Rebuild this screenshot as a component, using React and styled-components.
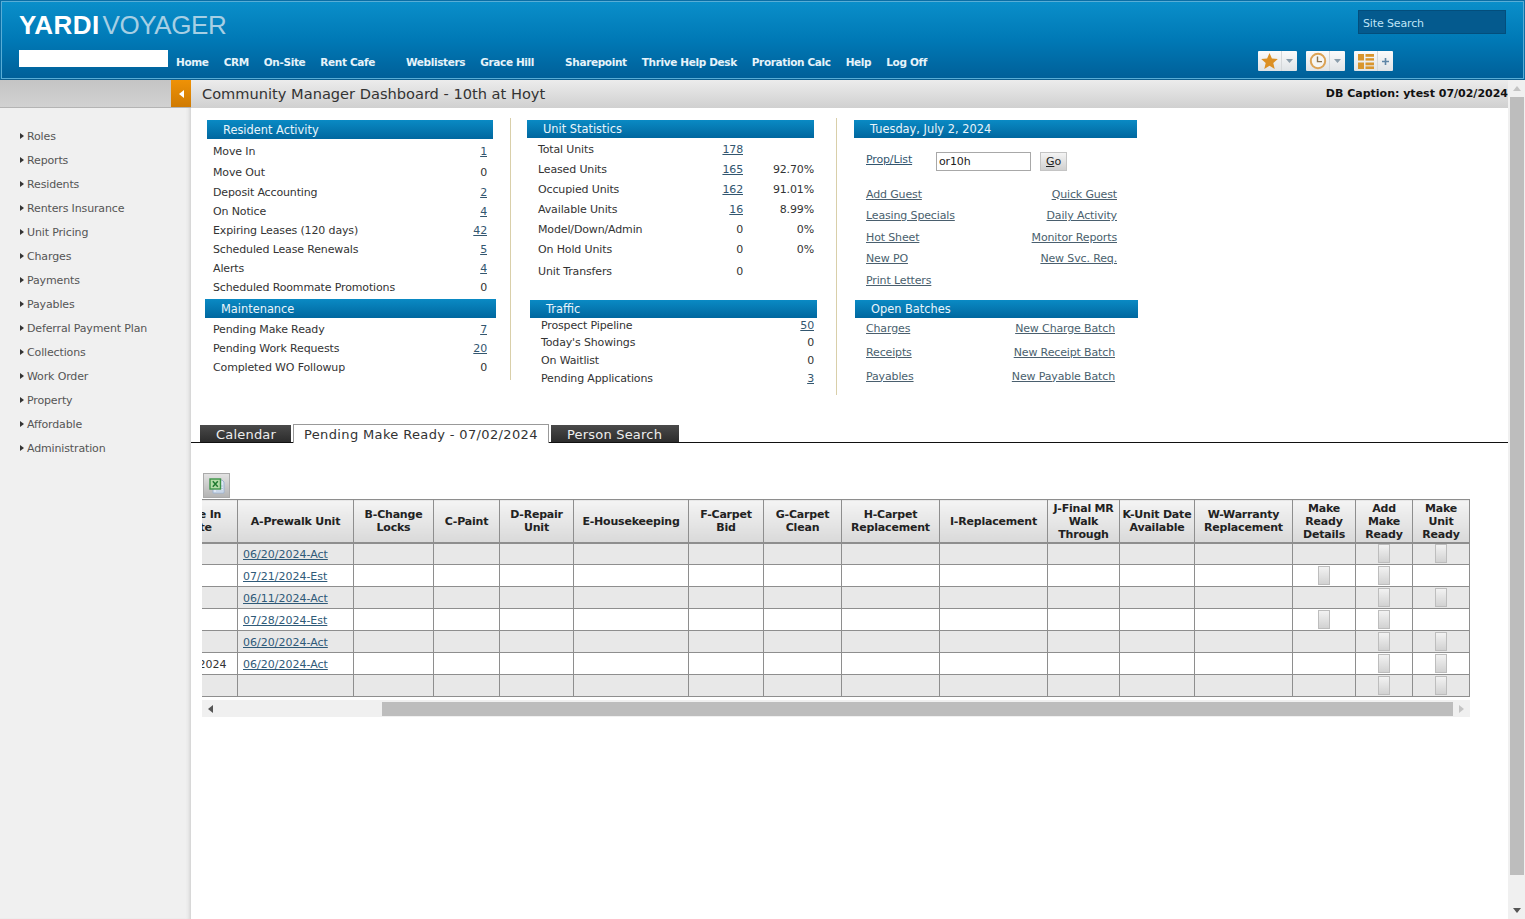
import React, { useLayoutEffect, useRef } from 'react';
import styled, { createGlobalStyle } from 'styled-components';

const GlobalStyle = createGlobalStyle`
  html, body {
    margin: 0;
    padding: 0;
    overflow: hidden;
    background: #fff;
  }
  body {
    font-family: "DejaVu Sans", Verdana, sans-serif;
    font-size: 11px;
    letter-spacing: -0.14px;
    color: #333;
  }
  * {
    box-sizing: border-box;
  }
`;

const Page = styled.div`
  width: 1525px;
  height: 919px;
  display: flex;
  flex-direction: column;
  overflow: hidden;
`;

const Header = styled.header`
  height: 80px;
  flex: none;
  display: flex;
  flex-direction: column;
  position: relative;
  background: linear-gradient(#0a8fca, #0079b6 50%, #005f98);
  border: 1px solid #0b6ea5;
  box-shadow: inset 0 0 0 1px #58add6;
  border-bottom: 1px solid #0c5f8f;
`;

const TopRow = styled.div`
  height: 48px;
  display: flex;
  justify-content: space-between;
  padding: 9px 18px 0 18px;
`;

const Logo = styled.div`
  font-family: "Liberation Sans", Arial, sans-serif;
  font-size: 26px;
  line-height: 30px;
  letter-spacing: 0.4px;
  color: #fff;
  font-weight: 700;
  span {
    font-weight: 400;
    letter-spacing: -0.4px;
    color: #a6cfe4;
    margin-left: 3px;
  }
`;

const SiteSearch = styled.div`
  width: 148px;
  height: 24px;
  background: #045a8e;
  border: 1px solid #034e7c;
  color: #bfe4f7;
  font-size: 11px;
  line-height: 25px;
  padding-left: 4px;
`;

const NavRow = styled.div`
  display: flex;
  align-items: center;
  padding-left: 18px;
  height: 24px;
`;

const BlankBox = styled.div`
  width: 149px;
  height: 17px;
  background: #fff;
  margin-right: 8px;
  margin-top: -6px;
`;

const NavLink = styled.a`
  color: #e6f3fa;
  font-size: 10.5px;
  font-weight: 700;
  letter-spacing: -0.36px;
  margin-right: ${(p) => (p.$wide ? '31px' : '15px')};
  margin-top: 1px;
  white-space: nowrap;
`;

const ToolGroup = styled.div`
  display: flex;
  gap: 9px;
  position: absolute;
  top: 50px;
  left: 1257px;
`;

const ToolButton = styled.div`
  width: 39px;
  height: 20px;
  display: flex;
  background: linear-gradient(#fbfbfb, #dfe3e6);
  border-radius: 1px;
`;

const ToolIcon = styled.div`
  width: 24px;
  display: flex;
  align-items: center;
  justify-content: center;
  border-right: 1px solid #d5d8da;
`;

const ToolCaret = styled.div`
  flex: 1;
  display: flex;
  align-items: center;
  justify-content: center;
`;

const Body = styled.div`
  flex: 1;
  display: flex;
  min-height: 0;
`;

const Sidebar = styled.aside`
  width: 191px;
  flex: none;
  display: flex;
  flex-direction: column;
  background: #f0f0f0;
  box-shadow: inset -4px 0 4px -3px #c8c8c8;
`;

const SidebarTop = styled.div`
  height: 28px;
  display: flex;
  justify-content: flex-end;
  background: linear-gradient(#c4c4c4, #d2d2d2);
  border-bottom: 1px solid #b4b4b4;
`;

const Collapse = styled.div`
  width: 20px;
  height: 27px;
  background: linear-gradient(#ef9206, #cf7a02);
  display: flex;
  align-items: center;
  justify-content: center;
  &::before {
    content: '';
    border-style: solid;
    border-width: 4px 5px 4px 0;
    border-color: transparent #fff transparent transparent;
  }
`;

const SideList = styled.nav`
  padding: 16px 0 0 20px;
`;

const SideItem = styled.div`
  height: 24px;
  display: flex;
  align-items: center;
  color: #555;
  font-size: 11px;
  &::before {
    content: '';
    border-style: solid;
    border-width: 3.5px 0 3.5px 4px;
    border-color: transparent transparent transparent #333;
    margin-right: 3px;
  }
`;

const Main = styled.main`
  flex: 1;
  display: flex;
  min-width: 0;
`;

const Content = styled.div`
  flex: 1;
  min-width: 0;
`;

const VBar = styled.div`
  width: 17px;
  flex: none;
  display: flex;
  flex-direction: column;
  background: #f0f0f0;
`;

const VThumb = styled.div`
  height: 778px;
  margin: 0 1px 0 2px;
  background: #bdbdbd;
`;

const BarGap = styled.div`
  flex: ${(p) => (p.$width ? 'none' : '1')};
  width: ${(p) => (p.$width ? `${p.$width}px` : 'auto')};
`;

const arrowBorders = {
  up: { width: '0 4px 5px 4px', side: 'border-bottom-color' },
  down: { width: '5px 4px 0 4px', side: 'border-top-color' },
  left: { width: '4px 5px 4px 0', side: 'border-right-color' },
  right: { width: '4px 0 4px 5px', side: 'border-left-color' },
};

const BarArrow = styled.div`
  width: 17px;
  height: 17px;
  flex: none;
  display: flex;
  align-items: center;
  justify-content: center;
  &::before {
    content: '';
    border-style: solid;
    border-color: transparent;
    border-width: ${(p) => arrowBorders[p.$dir].width};
    ${(p) => arrowBorders[p.$dir].side}: ${(p) => (p.$dim ? '#c4c4c4' : '#555')};
  }
`;

const TitleBar = styled.div`
  height: 28px;
  display: flex;
  align-items: center;
  justify-content: space-between;
  padding: 0 0 2px 11px;
  background: linear-gradient(#ececec, #d0d0d0);
`;

const Title = styled.h1`
  margin: 0;
  font-size: 14.6px;
  font-weight: 400;
  letter-spacing: 0;
  color: #333;
`;

const Caption = styled.div`
  font-size: 11px;
  font-weight: 700;
  letter-spacing: 0;
  color: #111;
`;

const Dashboard = styled.div`
  height: 316px;
  display: flex;
  align-items: flex-start;
  padding: 12px 0 0 14px;
`;

const Column = styled.section`
  width: ${(p) => p.$width}px;
  flex: none;
`;

const Divider = styled.div`
  width: 1px;
  flex: none;
  height: ${(p) => p.$height}px;
  margin: -2px ${(p) => p.$right}px 0 ${(p) => p.$left}px;
  background: #d9cfa9;
`;

const PanelHead = styled.h2`
  margin: ${(p) => p.$margin || '0'};
  height: ${(p) => p.$height || 18}px;
  padding-left: 16px;
  display: flex;
  align-items: center;
  font-size: 11.4px;
  font-weight: 400;
  letter-spacing: 0;
  color: #e9f5fb;
  background: linear-gradient(#0a8ac4, #00679f);
`;

const Row = styled.div`
  height: ${(p) => p.$h}px;
  display: grid;
  grid-template-columns: ${(p) => p.$cols};
  align-items: center;
  padding: ${(p) => p.$pad};
  font-size: 11px;
  color: #333;
  white-space: nowrap;
`;

const Num = styled.span`
  text-align: right;
`;

const NumLink = styled.a`
  text-align: right;
  color: #33566f;
  text-decoration: underline;
`;

const PropRow = styled.div`
  display: flex;
  align-items: flex-start;
  padding: 14px 0 0 12px;
  height: 45px;
`;

const PropLabel = styled.a`
  width: 70px;
  color: #33566f;
  text-decoration: underline;
  margin-top: 1px;
`;

const PropInput = styled.div`
  width: 95px;
  height: 19px;
  border: 1px solid #a8a8a8;
  background: #fff;
  color: #222;
  padding-left: 2px;
  line-height: 17px;
  font-size: 11px;
  margin-right: 9px;
`;

const GoButton = styled.div`
  width: 27px;
  height: 19px;
  background: linear-gradient(#f4f4f4, #d0d0d0);
  border: 1px solid #c4c4c4;
  text-align: center;
  line-height: 18px;
  color: #222;
  u {
    text-decoration: underline;
  }
`;

const LinkRow = styled.div`
  height: ${(p) => p.$h}px;
  display: flex;
  justify-content: space-between;
  align-items: center;
  padding: 0 ${(p) => p.$right || 21}px 0 12px;
`;

const PlainLink = styled.a`
  color: #4a5f6e;
  text-decoration: underline;
  white-space: nowrap;
  font-size: 11px;
`;

const TabBar = styled.div`
  height: 18px;
  display: flex;
  align-items: flex-end;
  gap: 2px;
  padding-left: 9px;
  border-bottom: 1px solid #111;
  box-sizing: content-box;
`;

const Tab = styled.div`
  height: ${(p) => (p.$active ? '19px' : '17px')};
  width: ${(p) => p.$width}px;
  margin-bottom: ${(p) => (p.$active ? '-1px' : '0')};
  display: flex;
  align-items: center;
  padding-left: ${(p) => p.$pad}px;
  padding-top: ${(p) => (p.$active ? '0' : '1px')};
  font-size: 13px;
  letter-spacing: ${(p) => (p.$active ? '0.36px' : '0.2px')};
  white-space: nowrap;
  background: ${(p) => (p.$active ? '#fff' : 'linear-gradient(#4a4a4a, #2c2c2c)')};
  color: ${(p) => (p.$active ? '#333' : '#eee')};
  border: ${(p) => (p.$active ? '1px solid #999' : 'none')};
  border-bottom: none;
`;

const GridArea = styled.div`
  padding: 30px 0 0 11px;
`;

const ExcelButton = styled.div`
  width: 27px;
  height: 25px;
  margin-left: 1px;
  margin-bottom: 1px;
  display: flex;
  align-items: center;
  justify-content: center;
  background: linear-gradient(#e2e2e2, #b4b4b4);
  border: 1px solid #aaa;
`;

const ScrollWrap = styled.div`
  width: 1268px;
  overflow: hidden;
`;

const HBar = styled.div`
  width: 1268px;
  height: 17px;
  display: flex;
  background: #f0f0f0;
`;

const HThumb = styled.div`
  flex: 1;
  margin: 2px 0 1px;
  background: #bdbdbd;
`;

const Table = styled.table`
  width: 1464px;
  table-layout: fixed;
  border-collapse: collapse;
  margin-bottom: 3px;
`;

const Th = styled.th`
  height: 43px;
  padding: 1px 1px 0;
  font-size: 11px;
  line-height: 13px;
  font-weight: 700;
  letter-spacing: -0.2px;
  color: #222;
  background: linear-gradient(#f4f4f4, #d9d9d9);
  border: 1px solid #8e8e8e;
  border-bottom: 2px solid #8e8e8e;
`;

const Tr = styled.tr`
  background: ${(p) => (p.$odd ? '#e8e8e8' : '#fff')};
`;

const Td = styled.td`
  height: 22px;
  padding: 1px 0 0 5px;
  border: 1px solid #8e8e8e;
  font-size: 11px;
  letter-spacing: 0;
  white-space: nowrap;
  overflow: hidden;
  text-align: ${(p) => (p.$center ? 'center' : 'left')};
  a {
    color: #2f5a78;
    text-decoration: underline;
  }
`;

const CellButton = styled.div`
  width: 12px;
  height: 19px;
  margin: -1px auto 0;
  position: relative;
  left: -3px;
  background: linear-gradient(#f2f2f2, #d2d2d2);
  border: 1px solid #bdbdbd;
`;

const columns = [
  ['Unit', 151],
  ['Move In Date', 80],
  ['A-Prewalk Unit', 116],
  ['B-Change Locks', 80],
  ['C-Paint', 66],
  ['D-Repair Unit', 74],
  ['E-Housekeeping', 115],
  ['F-Carpet Bid', 75],
  ['G-Carpet Clean', 78],
  ['H-Carpet Replacement', 98],
  ['I-Replacement', 108],
  ['J-Final MR Walk Through', 72],
  ['K-Unit Date Available', 75],
  ['W-Warranty Replacement', 98],
  ['Make Ready Details', 63],
  ['Add Make Ready', 57],
  ['Make Unit Ready', 57],
];

const rows = [
  { date: '06/20/2024-Act', details: false, add: true, ready: true },
  { date: '07/21/2024-Est', details: true, add: true, ready: false },
  { date: '06/11/2024-Act', details: false, add: true, ready: true },
  { date: '07/28/2024-Est', details: true, add: true, ready: false },
  { date: '06/20/2024-Act', details: false, add: true, ready: true },
  { moveIn: '07/02/2024', date: '06/20/2024-Act', details: false, add: true, ready: true },
  { date: '', details: false, add: true, ready: true },
];

const sideItems = [
  'Roles', 'Reports', 'Residents', 'Renters Insurance', 'Unit Pricing', 'Charges', 'Payments',
  'Payables', 'Deferral Payment Plan', 'Collections', 'Work Order', 'Property', 'Affordable', 'Administration',
];

const navItems = [
  ['Home'], ['CRM'], ['On-Site'], ['Rent Cafe', true], ['Weblisters'], ['Grace Hill', true],
  ['Sharepoint'], ['Thrive Help Desk'], ['Proration Calc'], ['Help'], ['Log Off'],
];

const residentRows = [
  ['Move In', '1', 24, true], ['Move Out', '0', 18], ['Deposit Accounting', '2', 22, true],
  ['On Notice', '4', 16, true], ['Expiring Leases (120 days)', '42', 22, true],
  ['Scheduled Lease Renewals', '5', 16, true], ['Alerts', '4', 22, true],
  ['Scheduled Roommate Promotions', '0', 16],
];

const maintenanceRows = [
  ['Pending Make Ready', '7', 22, true], ['Pending Work Requests', '20', 16, true],
  ['Completed WO Followup', '0', 22],
];

const unitRows = [
  ['Total Units', '178', '', 22, true], ['Leased Units', '165', '92.70%', 18, true],
  ['Occupied Units', '162', '91.01%', 22, true], ['Available Units', '16', '8.99%', 18, true],
  ['Model/Down/Admin', '0', '0%', 22], ['On Hold Units', '0', '0%', 18],
  ['Unit Transfers', '0', '', 26],
];

const trafficRows = [
  ['Prospect Pipeline', '50', 14, true], ["Today's Showings", '0', 20],
  ['On Waitlist', '0', 16], ['Pending Applications', '3', 20, true],
];

const quickLinks = [
  ['Add Guest', 'Quick Guest', 22], ['Leasing Specials', 'Daily Activity', 21],
  ['Hot Sheet', 'Monitor Reports', 22], ['New PO', 'New Svc. Req.', 21], ['Print Letters', '', 22],
];

const batchLinks = [
  ['Charges', 'New Charge Batch', 20], ['Receipts', 'New Receipt Batch', 28], ['Payables', 'New Payable Batch', 20],
];

function Caret() {
  return (
    <svg width="7" height="4" viewBox="0 0 7 4">
      <path d="M0 0h7L3.5 4z" fill="#8a9dab" />
    </svg>
  );
}

function StarIcon() {
  return (
    <svg width="17" height="16" viewBox="0 0 17 16">
      <path d="M8.5 0l2.4 5.6 5.9.5-4.5 3.9 1.4 6-5.2-3.2L3.3 16l1.4-6L.2 6.1l5.9-.5z" fill="#dc9024" />
    </svg>
  );
}

function ClockIcon() {
  return (
    <svg width="18" height="18" viewBox="0 0 18 18" fill="none">
      <circle cx="9" cy="9" r="7.2" stroke="#dca355" strokeWidth="2" fill="#f6f6f4" />
      <path d="M8.5 4.5V9.6H13" stroke="#8a7350" strokeWidth="1.4" />
    </svg>
  );
}

function TilesIcon() {
  return (
    <svg width="16" height="15" viewBox="0 0 16 15" fill="#d9952c">
      <rect x="0" y="0" width="6" height="6.5" />
      <rect x="0" y="8.5" width="6" height="6.5" />
      <rect x="7.5" y="0" width="8.5" height="2.8" />
      <rect x="7.5" y="4.2" width="8.5" height="2.4" />
      <rect x="7.5" y="8.5" width="8.5" height="2.8" />
      <rect x="7.5" y="12.4" width="8.5" height="2.6" />
    </svg>
  );
}

function PlusIcon() {
  return (
    <svg width="7" height="7" viewBox="0 0 7 7">
      <path d="M3.5 0v7M0 3.5h7" stroke="#5f86a6" strokeWidth="1.6" />
    </svg>
  );
}

function ExcelIcon() {
  return (
    <svg width="16" height="16" viewBox="0 0 16 16">
      <path d="M4 2h9l2 2v11H4z" fill="#dfe8f5" stroke="#9fb4cf" strokeWidth="1" />
      <path d="M11 8h3M11 10.5h3M7 13h7" stroke="#b4c6dc" strokeWidth="1" />
      <rect x="1" y="1" width="10.5" height="10" fill="#b5dca8" stroke="#3c9348" strokeWidth="1.4" />
      <path d="M3.8 3.2l5 5.6M8.8 3.2l-5 5.6" stroke="#1f7a30" strokeWidth="1.5" />
    </svg>
  );
}

function StatRows({ items, pad }) {
  return items.map(([label, value, h, linked]) => (
    <Row key={label} $h={h} $cols="1fr auto" $pad={pad}>
      <span>{label}</span>
      {linked ? <NumLink>{value}</NumLink> : <Num>{value}</Num>}
    </Row>
  ));
}

function PendingTable() {
  const wrapRef = useRef(null);

  // the grid opens scrolled all the way to the right
  useLayoutEffect(() => {
    wrapRef.current.scrollLeft = wrapRef.current.scrollWidth;
  }, []);

  return (
    <>
      <ScrollWrap ref={wrapRef}>
        <Table>
          <colgroup>
            {columns.map(([name, width]) => (
              <col key={name} style={{ width }} />
            ))}
          </colgroup>
          <thead>
            <tr>
              {columns.map(([name]) => (
                <Th key={name}>{name}</Th>
              ))}
            </tr>
          </thead>
          <tbody>
            {rows.map((row, i) => (
              <Tr key={i} $odd={i % 2 === 0}>
                <Td />
                <Td>{row.moveIn}</Td>
                <Td>{row.date && <a>{row.date}</a>}</Td>
                {columns.slice(3, 14).map(([name]) => (
                  <Td key={name} />
                ))}
                <Td $center>{row.details && <CellButton />}</Td>
                <Td $center>{row.add && <CellButton />}</Td>
                <Td $center>{row.ready && <CellButton />}</Td>
              </Tr>
            ))}
          </tbody>
        </Table>
      </ScrollWrap>
      <HBar>
        <BarArrow $dir="left" />
        <BarGap $width={163} />
        <HThumb />
        <BarArrow $dir="right" $dim />
      </HBar>
    </>
  );
}

export default function App() {
  return (
    <Page>
      <GlobalStyle />
      <Header>
        <TopRow>
          <Logo>
            YARDI<span>VOYAGER</span>
          </Logo>
          <SiteSearch>Site Search</SiteSearch>
        </TopRow>
        <NavRow>
          <BlankBox />
          {navItems.map(([name, wide]) => (
            <NavLink key={name} $wide={wide}>
              {name}
            </NavLink>
          ))}
        </NavRow>
        <ToolGroup>
          <ToolButton>
            <ToolIcon><StarIcon /></ToolIcon>
            <ToolCaret><Caret /></ToolCaret>
          </ToolButton>
          <ToolButton>
            <ToolIcon><ClockIcon /></ToolIcon>
            <ToolCaret><Caret /></ToolCaret>
          </ToolButton>
          <ToolButton>
            <ToolIcon><TilesIcon /></ToolIcon>
            <ToolCaret><PlusIcon /></ToolCaret>
          </ToolButton>
        </ToolGroup>
      </Header>
      <Body>
        <Sidebar>
          <SidebarTop>
            <Collapse />
          </SidebarTop>
          <SideList>
            {sideItems.map((item) => (
              <SideItem key={item}>{item}</SideItem>
            ))}
          </SideList>
        </Sidebar>
        <Main>
          <Content>
            <TitleBar>
              <Title>Community Manager Dashboard - 10th at Hoyt</Title>
              <Caption>DB Caption: ytest 07/02/2024</Caption>
            </TitleBar>
            <Dashboard>
              <Column $width={291}>
                <PanelHead $margin="0 3px 0 2px" $height={19}>Resident Activity</PanelHead>
                <StatRows items={residentRows} pad="0 9px 0 8px" />
                <PanelHead $margin="4px 0 0" $height={19}>Maintenance</PanelHead>
                <StatRows items={maintenanceRows} pad="0 9px 0 8px" />
              </Column>
              <Divider $height={262} $left={14} $right={16} />
              <Column $width={290}>
                <PanelHead $margin="0 3px 0 0">Unit Statistics</PanelHead>
                {unitRows.map(([label, value, pct, h, linked]) => (
                  <Row key={label} $h={h} $cols="1fr 40px 71px" $pad="0 3px 0 11px">
                    <span>{label}</span>
                    {linked ? <NumLink>{value}</NumLink> : <Num>{value}</Num>}
                    <Num>{pct}</Num>
                  </Row>
                ))}
                <PanelHead $margin="16px 0 0 3px">Traffic</PanelHead>
                <StatRows items={trafficRows} pad="0 3px 0 14px" />
              </Column>
              <Divider $height={277} $left={19} $right={17} />
              <Column $width={284}>
                <PanelHead $margin="0 1px 0 0">Tuesday, July 2, 2024</PanelHead>
                <PropRow>
                  <PropLabel>Prop/List</PropLabel>
                  <PropInput>or10h</PropInput>
                  <GoButton><u>G</u>o</GoButton>
                </PropRow>
                {quickLinks.map(([left, right, h]) => (
                  <LinkRow key={left} $h={h}>
                    <PlainLink>{left}</PlainLink>
                    {right && <PlainLink>{right}</PlainLink>}
                  </LinkRow>
                ))}
                <PanelHead $margin="9px 0 0 1px">Open Batches</PanelHead>
                {batchLinks.map(([left, right, h]) => (
                  <LinkRow key={left} $h={h} $right={23}>
                    <PlainLink>{left}</PlainLink>
                    <PlainLink>{right}</PlainLink>
                  </LinkRow>
                ))}
              </Column>
            </Dashboard>
            <TabBar>
              <Tab $width={91} $pad={16}>Calendar</Tab>
              <Tab $active $width={256} $pad={10}>Pending Make Ready - 07/02/2024</Tab>
              <Tab $width={128} $pad={16}>Person Search</Tab>
            </TabBar>
            <GridArea>
              <ExcelButton><ExcelIcon /></ExcelButton>
              <PendingTable />
            </GridArea>
          </Content>
          <VBar>
            <BarArrow $dir="up" $dim />
            <VThumb />
            <BarGap />
            <BarArrow $dir="down" />
          </VBar>
        </Main>
      </Body>
    </Page>
  );
}
